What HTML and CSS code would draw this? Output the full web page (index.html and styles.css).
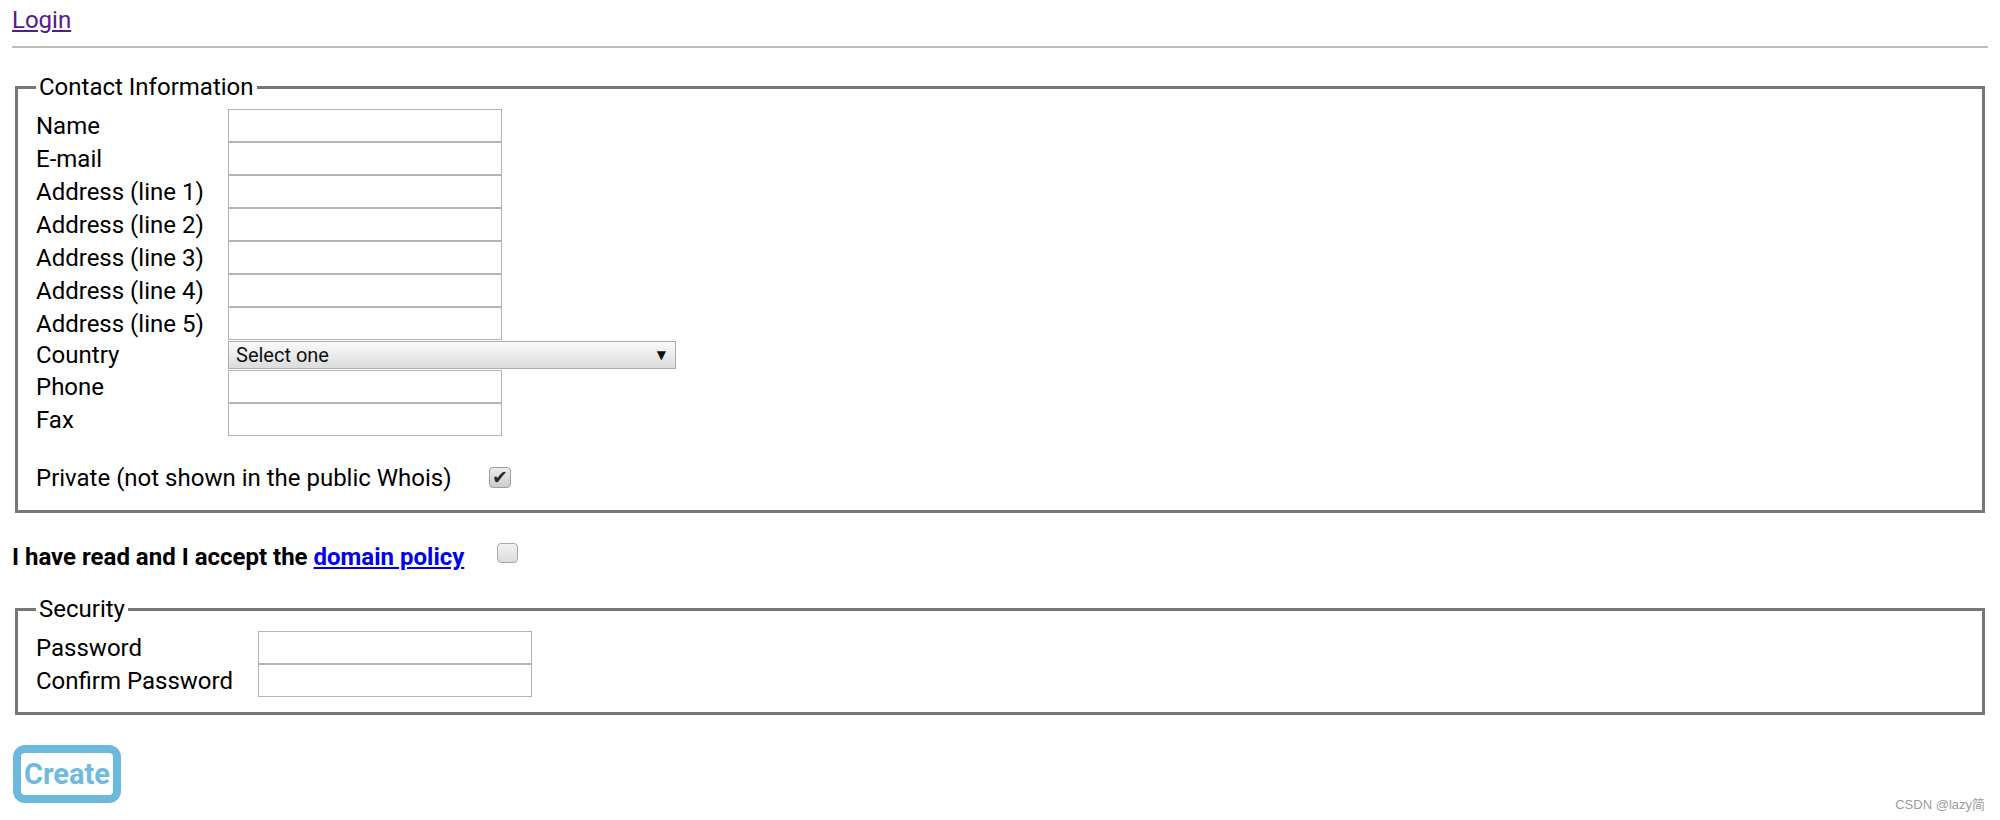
FILE: index.html
```html
<!DOCTYPE html>
<html lang="en">
<head>
<meta charset="utf-8">
<title>Register</title>
<link rel="stylesheet" href="styles.css">
</head>
<body>
  <div class="top"><a class="login" href="#">Login</a></div>
  <div class="rule"></div>

  <fieldset class="box contact">
    <legend>Contact Information</legend>
    <div class="grid">
      <label class="lbl">Name</label><input class="field" type="text">
      <label class="lbl">E-mail</label><input class="field" type="text">
      <label class="lbl">Address (line 1)</label><input class="field" type="text">
      <label class="lbl">Address (line 2)</label><input class="field" type="text">
      <label class="lbl">Address (line 3)</label><input class="field" type="text">
      <label class="lbl">Address (line 4)</label><input class="field" type="text">
      <label class="lbl">Address (line 5)</label><input class="field" type="text">
      <label class="lbl">Country</label>
      <div class="select-wrap">
        <select class="sel"><option>Select one</option></select>
        <span class="arrow">▼</span>
      </div>
      <label class="lbl">Phone</label><input class="field" type="text">
      <label class="lbl">Fax</label><input class="field" type="text">
    </div>
    <div class="private-row">
      <label class="lbl">Private (not shown in the public Whois)</label>
      <input class="check" type="checkbox" checked>
    </div>
  </fieldset>

  <div class="accept-row">
    <span class="accept-text">I have read and I accept the <a class="policy" href="#">domain policy</a></span>
    <input class="check unchecked" type="checkbox">
  </div>

  <fieldset class="box security">
    <legend>Security</legend>
    <div class="grid grid-sec">
      <label class="lbl">Password</label><input class="field" type="password">
      <label class="lbl">Confirm Password</label><input class="field" type="password">
    </div>
  </fieldset>

  <div class="actions"><button class="create" type="button">Create</button></div>

  <div class="watermark">CSDN @lazy简</div>
</body>
</html>
```

FILE: styles.css
```css
html, body {
  height: 100%;
}
body {
  margin: 0 12px;
  font-family: Roboto, "Noto Sans", "Liberation Sans", sans-serif;
  font-size: 24px;
  line-height: 28px;
  color: #000;
  background: #fff;
  position: relative;
  overflow: hidden;
}
.top {
  padding-top: 6px;
}
.login {
  color: #551a8b;
  text-decoration: underline;
}
.rule {
  margin-top: 12px;
  border-top: 2px solid #bdbdbd;
}
.box {
  margin: 25px 3px 0;
  padding: 8px 18px 16px;
  border: 3px solid #777;
  min-inline-size: auto;
}
.box legend {
  padding: 0 3px;
  line-height: 28px;
}
.grid {
  display: grid;
  grid-template-columns: 192px 1fr;
  align-items: center;
}
.grid-sec {
  grid-template-columns: 222px 1fr;
}
.lbl {
  line-height: 28px;
}
.field {
  box-sizing: border-box;
  width: 274px;
  height: 33px;
  margin: 0;
  border: 1px solid #b4b4b4;
  border-radius: 0;
  background: #fff;
  font: inherit;
  padding: 0 4px;
}
.select-wrap {
  box-sizing: border-box;
  width: 448px;
  height: 28px;
  margin: 1px 0;
  display: flex;
  align-items: center;
  border: 1px solid #acacac;
  background: linear-gradient(#fafafa, #dcdcdc);
}
.sel {
  flex: 1;
  appearance: none;
  -webkit-appearance: none;
  border: 0;
  background: transparent;
  font-family: Roboto, "Noto Sans", "Liberation Sans", sans-serif;
  font-size: 20px;
  color: #111;
  padding: 0 0 0 7px;
  height: 26px;
  outline: none;
}
.arrow {
  font-size: 12px;
  line-height: 12px;
  color: #111;
  padding-right: 9px;
  font-family: "DejaVu Sans", sans-serif;
}
.private-row {
  margin-top: 25px;
  height: 33px;
  display: grid;
  grid-template-columns: 453px auto;
  align-items: center;
  justify-items: start;
}
.check {
  appearance: none;
  -webkit-appearance: none;
  box-sizing: border-box;
  width: 22px;
  height: 21px;
  margin: 0;
  border: 1px solid #9e9e9e;
  border-radius: 4px;
  background: linear-gradient(#ececec, #cdcdcd);
  display: flex;
  align-items: center;
  justify-content: center;
}
.check:checked::after {
  content: "\2714";
  font-family: "DejaVu Sans", sans-serif;
  font-size: 19px;
  line-height: 19px;
  color: #2a2a2a;
}
.check.unchecked {
  width: 21px;
  height: 20px;
  border-color: #a8a8a8;
  background: linear-gradient(#f2f2f2, #dcdcdc);
}
.accept-row {
  margin-top: 30px;
  display: flex;
  align-items: flex-start;
  gap: 33px;
}
.accept-text {
  font-weight: bold;
  line-height: 28px;
}
.policy {
  color: #0000ee;
  text-decoration: underline;
}
.security {
  margin-top: 24px;
  padding-bottom: 15px;
}
.actions {
  margin-top: 30px;
  display: flex;
}
.create {
  margin: 0 0 0 1px;
  box-sizing: border-box;
  width: 108px;
  height: 58px;
  border: 8px solid #6bb9dd;
  border-radius: 12px;
  background: #fff;
  color: #6fbadd;
  font-family: Roboto, "Noto Sans", "Liberation Sans", sans-serif;
  font-weight: bold;
  font-size: 29px;
  padding: 0;
  display: flex;
  align-items: center;
  justify-content: center;
}
.watermark {
  position: absolute;
  right: 3px;
  bottom: 8px;
  font-family: "Liberation Sans", "Noto Sans CJK SC", sans-serif;
  font-size: 13px;
  line-height: 15px;
  color: #9d9d9d;
}
```
